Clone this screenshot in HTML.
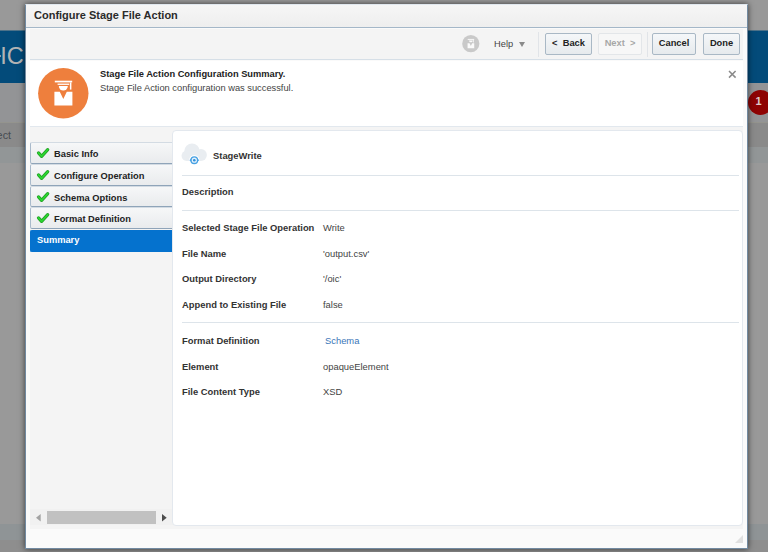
<!DOCTYPE html>
<html lang="en">
<head>
<meta charset="utf-8">
<title>Configure Stage File Action</title>
<style>
*{box-sizing:border-box;margin:0;padding:0}
html,body{width:768px;height:552px;overflow:hidden}
body{position:relative;background:#999999;font-family:"Liberation Sans",sans-serif;font-size:9.3px;color:#333}
.abs{position:absolute}
/* dimmed page behind the dialog */
#bg-blue{left:0;top:31px;width:768px;height:52px;background:#034b7a;box-shadow:0 -1px 0 rgba(3,75,122,.5)}
#bg-logo{left:-7.5px;top:42.5px;font-size:23.5px;line-height:26px;color:#b4b4b4;white-space:nowrap;letter-spacing:0}
#bg-band1{left:0;top:83px;width:768px;height:39px;background:#939496}
#bg-band2{left:0;top:122px;width:768px;height:25px;background:#8a8a8a;border-top:1px solid #94948e}
#bg-band3{left:0;top:147px;width:768px;height:16px;background:#929697}
#bg-band4{left:0;top:524px;width:768px;height:16px;background:#8f9496}
#bg-band5{left:0;top:540px;width:768px;height:12px;background:#8e8e8e}
#bg-ect{left:-3.4px;top:128.2px;font-size:10.85px;line-height:14px;color:#474c52;white-space:nowrap}
#badge{left:748px;top:90px;width:25px;height:25px;border-radius:13px;background:#8e0303;color:#ddcaca;font-size:11px;font-weight:bold;line-height:23px;text-align:left;padding-left:7.4px}
/* dialog */
#dlg{left:25px;top:4px;width:723px;height:545px;background:#fafafa;border:1px solid #728aa1;border-top-color:#e1e8ef;box-shadow:0 0 6px rgba(0,0,0,.62)}
#in{left:1px;top:0;width:720px;height:543px}
#dlg-head{left:-1px;top:0;width:721px;height:23px;background:linear-gradient(#f6f6f6,#eeeeee);border-bottom:1px solid #a4b7c8}
#dlg-title{left:8px;top:3.4px;font-size:11px;line-height:14px;font-weight:bold;color:#2b2b2b;white-space:nowrap;letter-spacing:0}
#toolbar{left:3px;top:24px;width:713px;height:31px;background:#f4f4f4;border-bottom:1px solid #d6dfe7}
.btn{top:4px;height:22px;border:1px solid #a9b8c5;border-radius:2px;background:linear-gradient(#f5f7f9,#e6eaed);font-size:9.3px;font-weight:bold;color:#222;line-height:18.4px;text-align:center;white-space:nowrap;letter-spacing:0}
.btn.dis{border-color:#e3e6e9;background:#f7f7f7;color:#a7a7a7}
.vsep{top:3px;width:1px;height:25px;background:#e1e4e8}
#msg{left:3px;top:56px;width:713px;height:66px;background:#fff;border-bottom:1px solid #e2e8ee}
#steps .st{left:3px;width:143px;height:21.6px;border:1px solid #a9bacb;border-top-color:#d3dbe3;border-bottom-color:#8fa4b9;border-right:none;border-radius:2px 0 0 2px;background:linear-gradient(#f6f7f8,#e9ebed);font-size:9.3px;font-weight:bold;color:#222;line-height:22px;padding-left:23px;white-space:nowrap;letter-spacing:0}
#steps .st.sel{background:#0572ce;border-color:#0572ce;color:#fff;padding-left:6px;height:22.4px;line-height:18px}
#steps svg{position:absolute;left:-1px;top:-1px}
#main{left:145px;top:125px;width:571px;height:396px;background:#fff;border:1px solid #e3e8ee;border-radius:4px}
#mi{left:1px;top:1px}
.lbl{left:8px;font-size:9.4px;font-weight:bold;color:#333;line-height:12px;white-space:nowrap;letter-spacing:0}
.val{left:149px;font-size:9.4px;color:#444;line-height:12px;white-space:nowrap}
.hr{left:8px;width:557px;height:1px;background:#dde4ea}
</style>
</head>
<body>
<div class="abs" id="bg-band1"></div>
<div class="abs" id="bg-band2"></div>
<div class="abs" id="bg-band3"></div>
<div class="abs" id="bg-band4"></div>
<div class="abs" id="bg-band5"></div>
<div class="abs" id="bg-blue"></div>
<div class="abs" id="bg-logo">-IC</div>
<div class="abs" style="left:0;top:55px;width:1px;height:2px;background:#8d9aa5"></div>
<div class="abs" id="bg-ect">ect</div>
<div class="abs" id="badge">1</div>

<div class="abs" id="dlg">
 <div class="abs" id="in">
  <div class="abs" id="dlg-head"><div class="abs" id="dlg-title">Configure Stage File Action</div></div>

  <div class="abs" id="toolbar">
    <svg class="abs" style="left:432px;top:6px" width="18" height="18" viewBox="0 0 18 18">
      <circle cx="8.8" cy="8.7" r="8.6" fill="#c9c9c9"/>
      <g transform="translate(-0.5,-0.6) scale(0.37)" fill="#fafafa">
        <path d="M16.8 12.2h17.4v2.6H16.8z"/>
        <path d="M20.3 16.5h10a5 5 0 0 1-10 0z"/>
        <path d="M31.6 14.4h2v7.2h-2z"/>
        <path d="M16.4 23.7h5.4l3.5 7.4 3.5-7.4h5.6v13.7H16.4z"/>
      </g>
    </svg>
    <div class="abs" style="left:464px;top:9px;font-size:9.3px;line-height:12px;color:#444">Help</div>
    <svg class="abs" style="left:489px;top:13px" width="6" height="5" viewBox="0 0 6 5"><path d="M0 0h6L3 5z" fill="#8a8a8a"/></svg>
    <div class="abs vsep" style="left:508px"></div>
    <div class="abs btn" style="left:515px;width:47px">&lt;&nbsp; Back</div>
    <div class="abs btn dis" style="left:568px;width:44px">Next&nbsp; &gt;</div>
    <div class="abs vsep" style="left:617px"></div>
    <div class="abs btn" style="left:622px;width:44px">Cancel</div>
    <div class="abs btn" style="left:673px;width:37px">Done</div>
  </div>

  <div class="abs" id="msg">
    <svg class="abs" style="left:8px;top:7px" width="51" height="51" viewBox="0 0 51 51">
      <circle cx="25.3" cy="25.3" r="25.2" fill="#ee7f3d"/>
      <path d="M16.8 12.7h17.4v1.7H16.8z" fill="#fff"/>
      <path d="M19.6 15.6h11.6v1.3H19.6z" fill="#fff"/>
      <path d="M20.8 18h9a4.5 4.5 0 0 1-9 0z" fill="#fff"/>
      <path d="M31.9 14.4h1.5v7.2h-1.5z" fill="#fff"/>
      <path d="M16.4 23.7h5.4l3.5 7.4 3.5-7.4h5.6v13.7H16.4z" fill="#fff"/>
    </svg>
    <div class="abs" style="left:70px;top:7px;font-size:9.3px;font-weight:bold;line-height:12px;color:#222;white-space:nowrap;letter-spacing:0">Stage File Action Configuration Summary.</div>
    <div class="abs" style="left:70px;top:21px;font-size:9.3px;line-height:12px;color:#444;white-space:nowrap">Stage File Action configuration was successful.</div>
    <svg class="abs" style="left:698px;top:9px" width="9" height="9" viewBox="0 0 9 9"><path d="M1 1l6.6 6.6M7.6 1L1 7.6" stroke="#8a8a8a" stroke-width="1.5" fill="none"/></svg>
  </div>

  <div class="abs" style="left:3px;top:122px;width:713px;height:402px;background:#f4f4f4"></div>
  <div id="steps">
    <div class="abs st" style="top:137.4px"><svg width="24" height="21" viewBox="0 0 24 21"><path d="M8.5 10.9l3.1 3.4 6.1-6.6" fill="none" stroke="#1f9a23" stroke-width="3.2" stroke-linecap="round" stroke-linejoin="round"/><path d="M8.5 10.9l3.1 3.4 6.1-6.6" fill="none" stroke="#2bd630" stroke-width="1.8" stroke-linecap="round" stroke-linejoin="round"/></svg>Basic Info</div>
    <div class="abs st" style="top:159px"><svg width="24" height="21" viewBox="0 0 24 21"><path d="M8.5 10.9l3.1 3.4 6.1-6.6" fill="none" stroke="#1f9a23" stroke-width="3.2" stroke-linecap="round" stroke-linejoin="round"/><path d="M8.5 10.9l3.1 3.4 6.1-6.6" fill="none" stroke="#2bd630" stroke-width="1.8" stroke-linecap="round" stroke-linejoin="round"/></svg>Configure Operation</div>
    <div class="abs st" style="top:180.6px"><svg width="24" height="21" viewBox="0 0 24 21"><path d="M8.5 10.9l3.1 3.4 6.1-6.6" fill="none" stroke="#1f9a23" stroke-width="3.2" stroke-linecap="round" stroke-linejoin="round"/><path d="M8.5 10.9l3.1 3.4 6.1-6.6" fill="none" stroke="#2bd630" stroke-width="1.8" stroke-linecap="round" stroke-linejoin="round"/></svg>Schema Options</div>
    <div class="abs st" style="top:202.2px"><svg width="24" height="21" viewBox="0 0 24 21"><path d="M8.5 10.9l3.1 3.4 6.1-6.6" fill="none" stroke="#1f9a23" stroke-width="3.2" stroke-linecap="round" stroke-linejoin="round"/><path d="M8.5 10.9l3.1 3.4 6.1-6.6" fill="none" stroke="#2bd630" stroke-width="1.8" stroke-linecap="round" stroke-linejoin="round"/></svg>Format Definition</div>
    <div class="abs st sel" style="top:224.5px">Summary</div>
  </div>

  <div class="abs" style="left:3px;top:504px;width:143px;height:16px;background:#f1f1f1"></div>
  <svg class="abs" style="left:9px;top:509px" width="5" height="8" viewBox="0 0 5 8"><path d="M4.7 0v7.4L0 3.7z" fill="#a3a3a3"/></svg>
  <div class="abs" style="left:20px;top:506px;width:109px;height:13px;background:#c1c1c1"></div>
  <svg class="abs" style="left:135px;top:509px" width="5" height="8" viewBox="0 0 5 8"><path d="M0 0v7.4L4.7 3.7z" fill="#4d4d4d"/></svg>

  <div class="abs" id="main"><div class="abs" id="mi">
    <svg class="abs" style="left:7px;top:11px" width="28" height="24" viewBox="0 0 28 24">
      <g fill="#e9edf1">
        <circle cx="11" cy="8.1" r="7.7"/>
        <circle cx="20" cy="12" r="5.9"/>
        <circle cx="5.6" cy="12.8" r="5.1"/>
        <rect x="5.6" y="10" width="14.4" height="7.9"/>
      </g>
      <circle cx="13.3" cy="17.2" r="5.2" fill="#fff"/>
      <circle cx="13.3" cy="17.2" r="3.3" fill="#e4f1fb" stroke="#47a1e3" stroke-width="1.3"/>
      <circle cx="13.3" cy="17.2" r="1.3" fill="#2f8fdc"/>
      <path d="M8.4 17.2l1.8-1.6v3.2zM18.2 17.2l-1.8-1.6v3.2z" fill="#47a1e3"/>
    </svg>
    <div class="abs lbl" style="left:39px;top:17.5px">StageWrite</div>
    <div class="abs hr" style="top:43px"></div>
    <div class="abs lbl" style="top:54px">Description</div>
    <div class="abs hr" style="top:78px"></div>
    <div class="abs lbl" style="top:90px">Selected Stage File Operation</div><div class="abs val" style="top:90px">Write</div>
    <div class="abs lbl" style="top:116px">File Name</div><div class="abs val" style="top:116px">'output.csv'</div>
    <div class="abs lbl" style="top:141px">Output Directory</div><div class="abs val" style="top:141px">'/oic'</div>
    <div class="abs lbl" style="top:167px">Append to Existing File</div><div class="abs val" style="top:167px">false</div>
    <div class="abs hr" style="top:190px"></div>
    <div class="abs lbl" style="top:203px">Format Definition</div><div class="abs val" style="top:203px;left:151px;color:#3a76b8">Schema</div>
    <div class="abs lbl" style="top:229px">Element</div><div class="abs val" style="top:229px">opaqueElement</div>
    <div class="abs lbl" style="top:254px">File Content Type</div><div class="abs val" style="top:254px">XSD</div>
  </div></div>

  <svg class="abs" style="left:708px;top:530px" width="8" height="8" viewBox="0 0 8 8"><path d="M8 0v8H0z" fill="#e0e0e0"/></svg>
 </div>
</div>
</body>
</html>
